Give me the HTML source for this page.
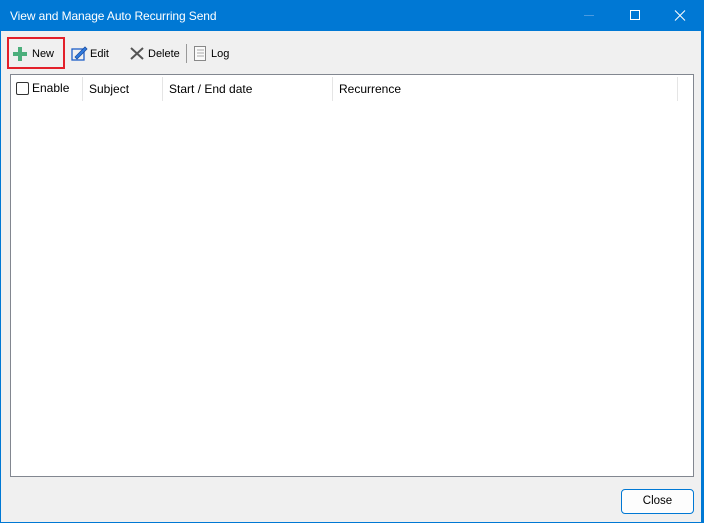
<!DOCTYPE html>
<html><head><meta charset="utf-8"><style>
*{margin:0;padding:0;box-sizing:border-box}
body{width:704px;height:523px;background:#f0f0f0;font-family:"Liberation Sans",sans-serif;font-size:12px;color:#000;position:relative;overflow:hidden}
.title{position:absolute;left:0;top:0;width:704px;height:31px;background:#0078d4;color:#fff;font-size:12px}
.title span{position:absolute;left:10px;top:9px;letter-spacing:-0.1px}
.rb{position:absolute;right:0;top:0;width:3px;height:523px;background:#0078d4}
.bb{position:absolute;left:0;bottom:0;width:704px;height:1px;background:#0078d4}
.lb{position:absolute;left:0;top:0;width:1px;height:523px;background:#0078d4}
.tb{position:absolute;top:48px;font-size:11px}
.list{position:absolute;left:10px;top:74px;width:684px;height:403px;background:#fff;border:1px solid #828790}
.hd{position:absolute;font-size:12px}
.sep{position:absolute;top:2px;width:1px;height:24px;background:#e5e5e5}
.close{position:absolute;left:621px;top:489px;width:73px;height:25px;border:1px solid #0078d4;border-radius:4px;background:#fdfdfd;text-align:center;line-height:23px;font-size:11.5px}
</style></head><body>
<div class="title"><span>View and Manage Auto Recurring Send</span>
<svg style="position:absolute;left:580px;top:10px" width="120" height="12"><line x1="4" y1="5.5" x2="14" y2="5.5" stroke="#4a9ae0" stroke-width="1"/><rect x="50.5" y="0.5" width="9" height="9" fill="none" stroke="#fff"/><path d="M95 0.5 L105 10.5 M105 0.5 L95 10.5" stroke="#fff"/></svg></div>
<div class="rb"></div><div class="lb"></div><div class="bb"></div>
<div style="position:absolute;left:7px;top:37px;width:58px;height:32px;border:2px solid #e3202a"></div>
<svg style="position:absolute;left:13px;top:47px" width="14" height="14"><rect x="5" y="0" width="4" height="14" fill="#4caf7c"/><rect x="0" y="5" width="14" height="4" fill="#4caf7c"/></svg>
<div class="tb" style="left:32px">New</div>
<svg style="position:absolute;left:71px;top:45px" width="17" height="16"><rect x="1" y="4" width="12" height="11" fill="none" stroke="#1e5fc8" stroke-width="1.3"/><path d="M4 12 L14 2 L16 4 L6 14 Z" fill="#2f7be0" stroke="#1e4fa0" stroke-width="0.8"/></svg>
<div class="tb" style="left:90px">Edit</div>
<svg style="position:absolute;left:130px;top:47px" width="14" height="13"><path d="M1 1 L13 12 M13 1 L1 12" stroke="#555" stroke-width="2"/></svg>
<div class="tb" style="left:148px">Delete</div>
<div style="position:absolute;left:186px;top:44px;width:1px;height:19px;background:#999"></div>
<svg style="position:absolute;left:193px;top:45px" width="14" height="17"><rect x="1.5" y="1.5" width="11" height="14" fill="#fafafa" stroke="#888"/><path d="M4 5h7M4 8h7M4 11h7" stroke="#aaa"/></svg>
<div class="tb" style="left:211px">Log</div>
<div class="list">
<div style="position:absolute;left:5px;top:7px;width:13px;height:13px;border:1px solid #333;border-radius:2px;background:#fff"></div>
<div class="hd" style="left:21px;top:6px">Enable</div>
<div class="sep" style="left:71px"></div>
<div class="hd" style="left:78px;top:7px">Subject</div>
<div class="sep" style="left:151px"></div>
<div class="hd" style="left:158px;top:7px">Start / End date</div>
<div class="sep" style="left:321px"></div>
<div class="hd" style="left:328px;top:7px">Recurrence</div>
<div class="sep" style="left:666px"></div>
</div>
<div class="close">Close</div>
</body></html>
